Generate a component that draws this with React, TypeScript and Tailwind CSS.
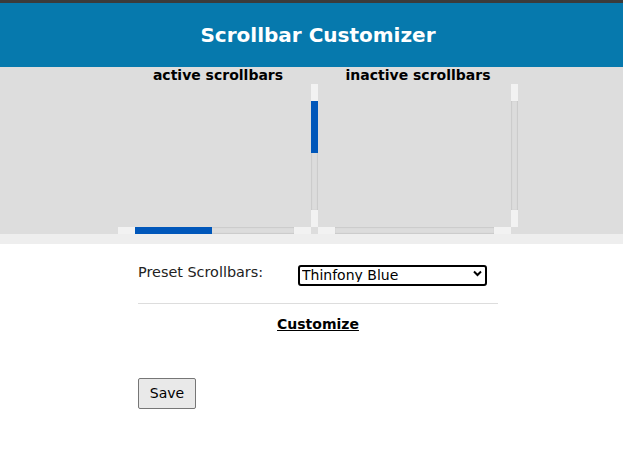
import React from 'react'

const font = { fontFamily: '"DejaVu Sans", Verdana, sans-serif' }

function VBar({ active }: { active: boolean }) {
  return (
    <div className="flex w-[7px] flex-col">
      <div className="h-[17px] bg-[#f2f2f2]" />
      <div className="flex flex-1 flex-col bg-[#dcdcdc] shadow-[inset_1px_0_1px_rgba(0,0,0,0.08),inset_-1px_0_1px_rgba(0,0,0,0.08)]">
        {active && <div className="h-[52px] bg-[#0057ba]" />}
      </div>
      <div className="h-[17px] bg-[#f2f2f2]" />
    </div>
  )
}

function HBar({ active }: { active: boolean }) {
  return (
    <div className="flex h-[7px] flex-1">
      <div className="w-[17px] bg-[#f2f2f2]" />
      <div className="flex flex-1 bg-[#dcdcdc] shadow-[inset_0_1px_1px_rgba(0,0,0,0.08),inset_0_-1px_1px_rgba(0,0,0,0.08)]">
        {active && <div className="w-[77px] bg-[#0057ba]" />}
      </div>
      <div className="w-[17px] bg-[#f2f2f2]" />
    </div>
  )
}

function Preview({ title, active }: { title: string; active: boolean }) {
  return (
    <div className="flex w-[200px] flex-col">
      <div className="h-[17px] text-center text-[14px] font-bold leading-[17px] text-black">{title}</div>
      <div className="flex h-[150px] flex-col">
        <div className="flex flex-1">
          <div className="flex-1" />
          <VBar active={active} />
        </div>
        <div className="flex">
          <HBar active={active} />
          <div className="w-[7px] bg-[#dddddd]" />
        </div>
      </div>
    </div>
  )
}

export default function App() {
  return (
    <div className="min-h-screen w-full overflow-hidden bg-white" style={font}>
      <div className="w-[636px]">
        {/* Header */}
        <div className="h-[3px] bg-[#3b3b3b]" />
        <div className="flex h-[64px] items-center justify-center bg-[#0679ad]">
          <h1 className="text-[20px] font-bold text-white">Scrollbar Customizer</h1>
        </div>

        {/* Preview area */}
        <div className="flex justify-center bg-[#dddddd]">
          <Preview title="active scrollbars" active />
          <Preview title="inactive scrollbars" active={false} />
        </div>
        <div className="h-[10px] bg-[#eeeeee]" />

        {/* Settings */}
        <div className="mx-auto w-[360px] pt-[19px]">
          <div className="flex h-[21px] items-start">
            <label className="w-[160px] text-[14.4px] leading-[19px] text-[#222]">Preset Scrollbars:</label>
            <div className="relative">
              <select
                defaultValue="blue"
                className="h-[21px] w-[189px] appearance-none rounded-[3px] border-2 border-black bg-white pl-[2px] text-[14px] leading-none text-black"
                style={font}
              >
                <option value="blue">Thinfony Blue</option>
              </select>
              <svg
                className="pointer-events-none absolute right-[5px] top-[7px]"
                width="9"
                height="7"
                viewBox="0 0 9 7"
              >
                <path d="M1 1.5 L4.5 5 L8 1.5" fill="none" stroke="black" strokeWidth="2" />
              </svg>
            </div>
          </div>
          <div className="mt-[19px] h-px bg-[#dddddd]" />
          <div className="mt-[8px] text-center">
            <a href="#" className="text-[14px] font-bold text-black underline">
              Customize
            </a>
          </div>
          <button className="mt-[42px] h-[31px] w-[58px] rounded-[2px] border border-[#767676] bg-[#e9e9e9] text-[14px] text-black">
            Save
          </button>
        </div>
      </div>
    </div>
  )
}
